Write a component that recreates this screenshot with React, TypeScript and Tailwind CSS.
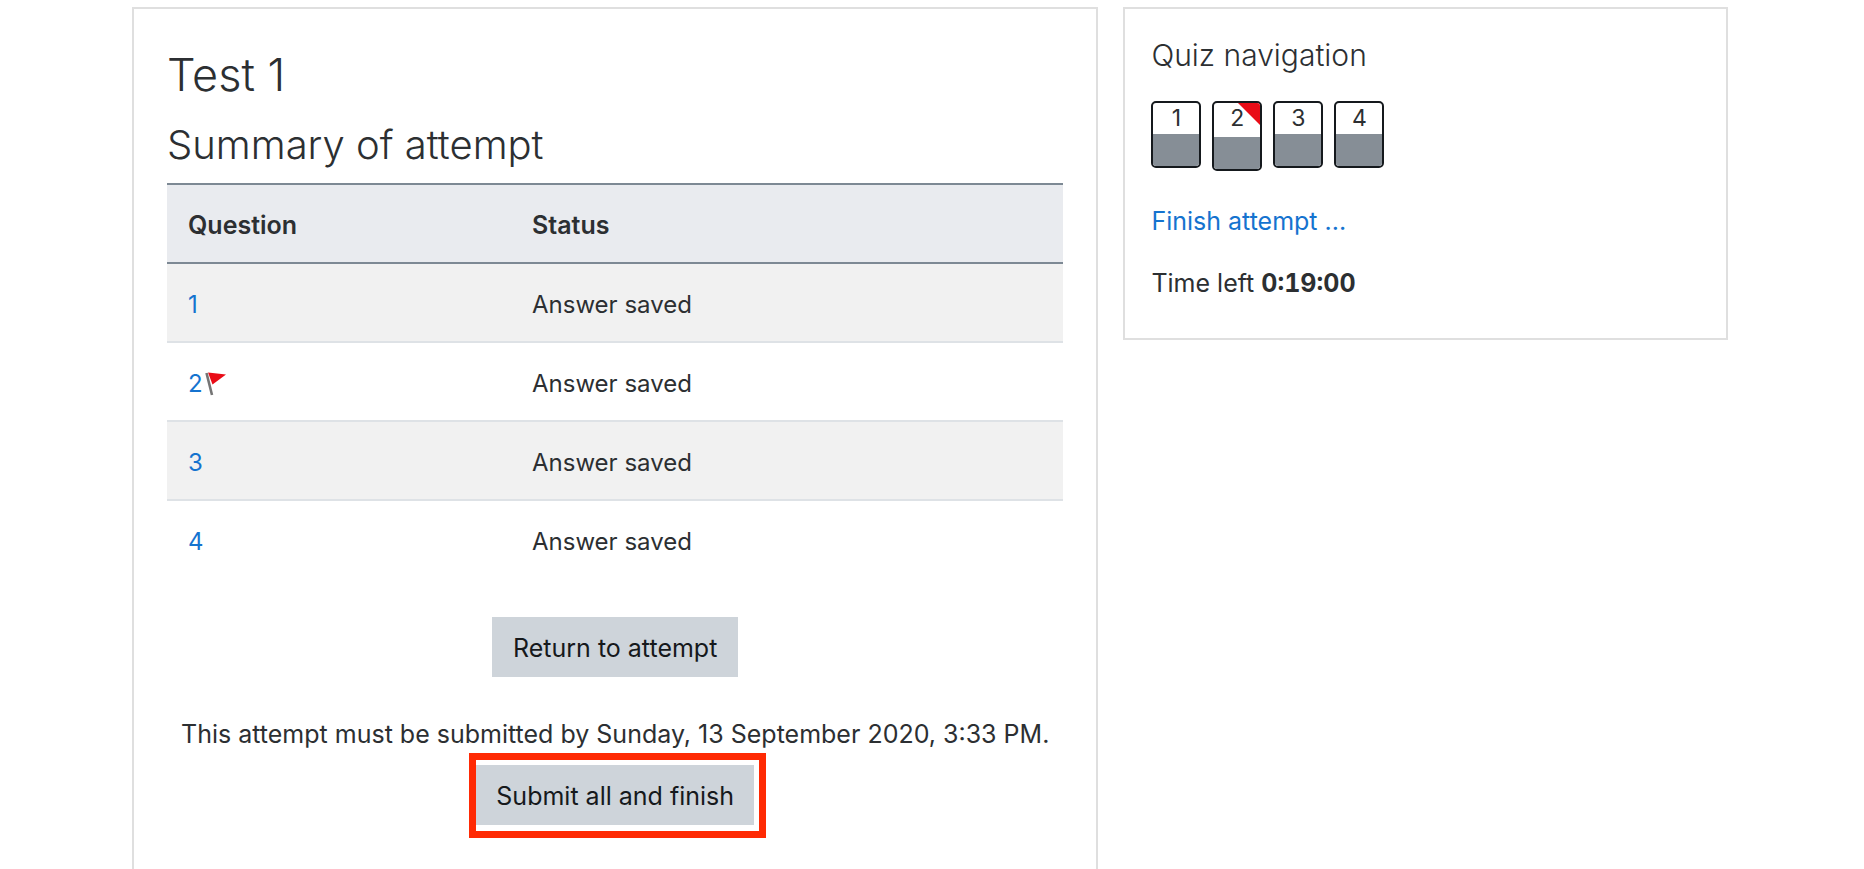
import React from 'react';
import { clsx } from 'clsx';

interface Question {
  number: number;
  status: string;
  flagged: boolean;
}

const questions: Question[] = [
  { number: 1, status: 'Answer saved', flagged: false },
  { number: 2, status: 'Answer saved', flagged: true },
  { number: 3, status: 'Answer saved', flagged: false },
  { number: 4, status: 'Answer saved', flagged: false },
];

const FlagIcon = () => (
  <svg width="21" height="24" viewBox="0 0 21 24" role="img" aria-label="Flagged">
    <path d="M1.5 1 L7 23" stroke="#757575" strokeWidth="2.6" fill="none" />
    <path d="M3 0.5 L21 2.5 L7.5 12.5 Z" fill="#e90c17" />
  </svg>
);

const SummaryTable = () => (
  <table className="w-full border-collapse text-left">
    <thead>
      <tr className="h-[79px] border-y-2 border-[#7d8994] bg-[#e9ebef]">
        <th className="w-[344px] px-[21px] pt-1 font-semibold">Question</th>
        <th className="px-[21px] pt-1 font-semibold">Status</th>
      </tr>
    </thead>
    <tbody className="text-[24px]">
      {questions.map((q) => (
        <tr
          key={q.number}
          className="h-[79px] border-t-2 border-[#dee2e6] odd:bg-[#f1f1f1] first:border-[#7d8994]"
        >
          <td className="px-[21px] pt-1">
            <div className="flex items-center gap-[2px]">
              <a href={`#question-${q.number}`} className="text-[#1573cf]">
                {q.number}
              </a>
              {q.flagged && <FlagIcon />}
            </div>
          </td>
          <td className="px-[21px] pt-1">{q.status}</td>
        </tr>
      ))}
    </tbody>
  </table>
);

const NavButton = ({ number, flagged }: Question) => (
  <a
    href={`#question-${number}`}
    className={clsx(
      'relative flex w-[50px] flex-col overflow-hidden rounded-[5px] border-2 border-[#15191d] bg-white text-center text-[23px] leading-[31px]',
      flagged ? 'h-[70px]' : 'h-[67px]'
    )}
  >
    {flagged && (
      <svg className="absolute right-0 top-0" width="22" height="22" viewBox="0 0 22 22" aria-hidden="true">
        <path d="M0 0 H22 V22 Z" fill="#e90c17" />
      </svg>
    )}
    <span className="relative flex-1">{number}</span>
    <span className="h-8 bg-[#868e96]" />
  </a>
);

const QuizNavigation = () => (
  <aside className="border-2 border-[#dfdfdf] px-[26px] pb-[37px] pt-[26px]">
    <h2 className="text-[30px] font-light leading-[40px]">Quiz navigation</h2>
    <nav className="mt-[26px] flex h-[70px] items-start gap-[11px]" aria-label="Quiz navigation">
      {questions.map((q) => (
        <NavButton key={q.number} {...q} />
      ))}
    </nav>
    <a href="#finish" className="mt-8 block leading-[36px] text-[#1573cf]">
      Finish attempt ...
    </a>
    <p className="mt-[26px] leading-[36px]">
      Time left <strong className="font-bold tabular-nums">0:19:00</strong>
    </p>
  </aside>
);

export default function App() {
  return (
    <div className="grid min-h-screen grid-cols-[967fr_605fr] items-start gap-[25px] bg-white pl-[132px] pr-[136px] pt-[7px] font-['Inter','Liberation_Sans',sans-serif] text-[25px] text-[#2c2f32]">
      <main className="flex min-h-[calc(100vh-7px)] flex-col items-center border-2 border-b-0 border-[#dfdfdf] px-[33px] pt-[38px]">
        <h1 className="w-full text-[45px] font-light leading-[56px]">Test 1</h1>
        <h2 className="mb-3 mt-4 w-full text-[40px] font-light leading-[52px]">Summary of attempt</h2>
        <SummaryTable />
        <button type="button" className="mt-[38px] h-[60px] bg-[#ced4da] px-[21px] pt-1 text-[#16191c]">
          Return to attempt
        </button>
        <p className="mt-[39px] leading-[36px]">
          This attempt must be submitted by Sunday, 13 September 2020, 3:33 PM.
        </p>
        <div className="relative mt-[13px]">
          <button type="button" className="h-[60px] bg-[#ced4da] px-5 pt-1 text-[#16191c]">
            Submit all and finish
          </button>
          {/* highlight ring around the final action */}
          <span className="pointer-events-none absolute -bottom-[13px] -left-[7px] -right-3 -top-3 border-[7px] border-[#ff2a04]" />
        </div>
      </main>
      <QuizNavigation />
    </div>
  );
}
